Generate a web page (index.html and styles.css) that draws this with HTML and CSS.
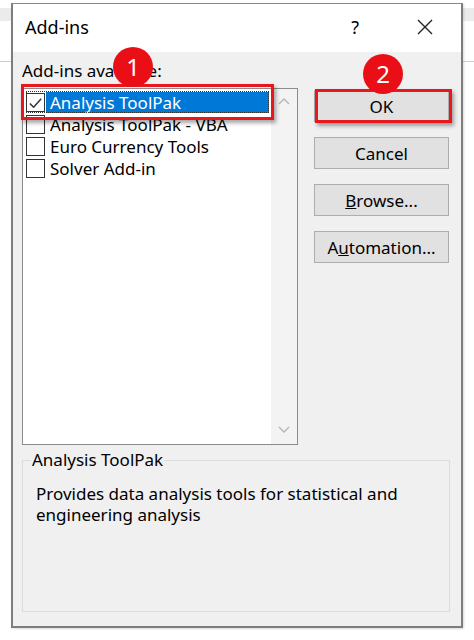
FILE: index.html
```html
<!DOCTYPE html>
<html lang="en">
<head>
<meta charset="utf-8">
<title>Add-ins</title>
<link rel="stylesheet" href="styles.css">
</head>
<body>
<div class="dialog">
  <header class="titlebar">
    <span class="title">Add-ins</span>
    <span class="help">?</span>
    <span class="close">
      <svg width="16" height="16" viewBox="0 0 16 16"><path d="M1 1 L15 15 M15 1 L1 15" stroke="#222" stroke-width="1.4" fill="none"/></svg>
    </span>
  </header>

  <div class="content">
    <div class="main">
      <div class="left">
        <div class="label">Add-ins available:</div>
        <div class="listbox">
          <ul class="items">
            <li class="item selected">
              <span class="check"><svg width="18" height="18" viewBox="0 0 18 18"><path d="M3 9.5 L7 13.5 L15 4.5" stroke="#333" stroke-width="1.6" fill="none"/></svg></span>
              <span class="name">Analysis ToolPak</span>
            </li>
            <li class="item"><span class="check"></span><span class="name">Analysis ToolPak - VBA</span></li>
            <li class="item"><span class="check"></span><span class="name">Euro Currency Tools</span></li>
            <li class="item"><span class="check"></span><span class="name">Solver Add-in</span></li>
          </ul>
          <div class="scrollbar">
            <svg width="12" height="8" viewBox="0 0 12 8"><path d="M1 7 L6 2 L11 7" stroke="#b5b5b5" stroke-width="1.3" fill="none"/></svg>
            <svg width="12" height="8" viewBox="0 0 12 8"><path d="M1 1 L6 6 L11 1" stroke="#b5b5b5" stroke-width="1.3" fill="none"/></svg>
          </div>
        </div>
      </div>
      <div class="buttons">
        <button class="btn">OK</button>
        <button class="btn">Cancel</button>
        <button class="btn"><u>B</u>rowse...</button>
        <button class="btn">A<u>u</u>tomation...</button>
      </div>
    </div>

    <fieldset class="group">
      <legend>Analysis ToolPak</legend>
      <p>Provides data analysis tools for statistical and engineering analysis</p>
    </fieldset>
  </div>

  <!-- step callouts drawn over the dialog -->
  <div class="callout-box box-one"></div>
  <div class="badge badge-one">1</div>
  <div class="callout-box box-two"></div>
  <div class="badge badge-two">2</div>
</div>
</body>
</html>
```

FILE: styles.css
```css
* { box-sizing: border-box; }

html, body {
  margin: 0;
  padding: 0;
}

body {
  width: 474px;
  height: 640px;
  overflow: hidden;
  font-family: "Noto Sans", "Open Sans", sans-serif;
  color: #000;
  /* app window behind the dialog */
  background:
    linear-gradient(#ebebeb, #ebebeb) 0 8px / 100% 13px no-repeat,
    linear-gradient(#cfcfcf, #cfcfcf) 0 61px / 100% 1px no-repeat,
    #ffffff;
}

.dialog {
  position: relative;
  margin: 3px 0 0 11px;
  width: 452px;
  background: #f0f0f0;
  border: 2px solid #7d7d7d;
  border-top: 1px solid #8a8a8a;
  box-shadow: 1px 1px 2px rgba(0,0,0,0.15);
}

.titlebar {
  display: flex;
  align-items: center;
  height: 48px;
  background: #fff;
  padding: 0 0 2px 12px;
}

.title {
  font-size: 18px;
  flex: 1;
}

.help {
  font-size: 18px;
  margin-right: 58px;
}

.close {
  display: flex;
  margin-right: 28px;
}

.content {
  padding: 9px 11px 14px 9px;
}

.main {
  display: flex;
  gap: 16px;
}

.left {
  width: 276px;
}

.label {
  font-size: 17px;
  line-height: 20px;
  height: 20px;
}

.listbox {
  margin-top: 7px;
  height: 357px;
  border: 1px solid #8c8c8c;
  background: #fff;
  display: flex;
}

.items {
  list-style: none;
  margin: 0;
  padding: 2px 0 0 3px;
  flex: 1;
}

.item {
  display: flex;
  align-items: center;
  height: 22px;
  font-size: 17px;
}

.item.selected {
  outline: 1px dotted #333;
  outline-offset: -1px;
  margin-right: 2px;
}

.check {
  width: 19px;
  height: 19px;
  border: 1px solid #333;
  background: #fff;
  flex: none;
  display: flex;
}

.name {
  padding-left: 5px;
  line-height: 21px;
  white-space: nowrap;
}

.item.selected .name {
  background: #0078d7;
  color: #fff;
  flex: 1;
  margin-left: 1px;
  padding-left: 4px;
}

.scrollbar {
  width: 26px;
  background: #f3f3f3;
  display: flex;
  flex-direction: column;
  justify-content: space-between;
  align-items: center;
  padding: 8px 0 10px;
}

.buttons {
  width: 135px;
  padding-top: 29px;
  display: flex;
  flex-direction: column;
  gap: 15px;
}

.btn {
  height: 32px;
  background: #e1e1e1;
  border: 1px solid #adadad;
  font-family: inherit;
  font-size: 17px;
  color: #000;
  padding: 0;
}

.group {
  margin: 4px 0 0 0;
  padding: 12px 12px 0 13px;
  height: 163px;
  border: 1px solid #dcdcdc;
  min-width: 0;
}

.group legend {
  font-size: 17px;
  line-height: 22px;
  padding: 0 1px;
  margin-left: -5px;
}

.group p {
  margin: 0;
  font-size: 17px;
  line-height: 21px;
}

.callout-box {
  position: absolute;
  border: 3px solid #e8161d;
  box-shadow: 2px 3px 4px rgba(0,0,0,0.35);
}

.box-one {
  left: 8px;
  top: 80px;
  width: 253px;
  height: 36px;
}

.box-two {
  left: 302px;
  top: 85px;
  width: 137px;
  height: 34px;
}

.badge {
  position: absolute;
  width: 40px;
  height: 40px;
  border-radius: 50%;
  background: #ea0f17;
  color: #fff;
  font-size: 24px;
  display: flex;
  align-items: center;
  justify-content: center;
  line-height: 1;
}

.badge-one {
  left: 100px;
  top: 43px;
}

.badge-two {
  left: 350px;
  top: 50px;
}
```
